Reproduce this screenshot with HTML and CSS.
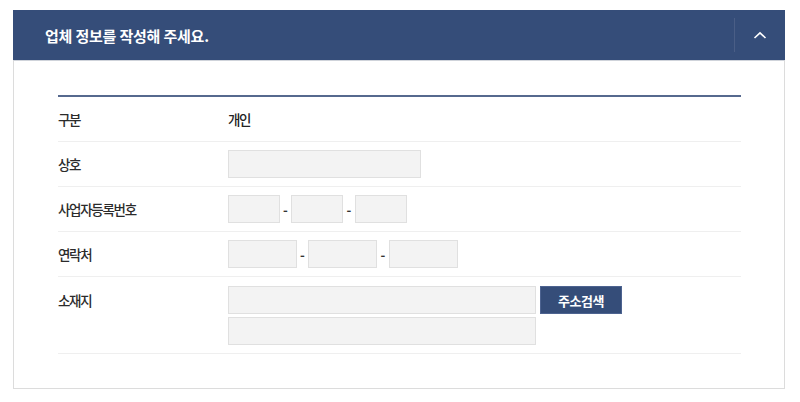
FILE: index.html
```html
<!DOCTYPE HTML>
<html>
<head>
	<title>업체 정보</title>
	<meta charset="utf-8" />
	<link rel="stylesheet" href="styles.css">
</head>
<body>
<div class="panel">
	<div class="panel-head">
		<h2>업체 정보를 작성해 주세요.</h2>
		<div class="toggle">
			<svg width="14" height="8" viewBox="0 0 14 8"><polyline points="1.5,7 7,1.8 12.5,7" fill="none" stroke="#fff" stroke-width="1.6" /></svg>
		</div>
	</div>
	<div class="panel-body">
		<div class="form">
			<div class="row">
				<div class="label">구분</div>
				<div class="value"><span class="text">개인</span></div>
			</div>
			<div class="row">
				<div class="label">상호</div>
				<div class="value"><input type="text" class="w193" /></div>
			</div>
			<div class="row">
				<div class="label">사업자등록번호</div>
				<div class="value">
					<input type="text" class="w52" /><span class="dash">-</span><input type="text" class="w52" /><span class="dash wide">-</span><input type="text" class="w52" />
				</div>
			</div>
			<div class="row">
				<div class="label">연락처</div>
				<div class="value">
					<input type="text" class="w69" /><span class="dash">-</span><input type="text" class="w69" /><span class="dash wide">-</span><input type="text" class="w69" />
				</div>
			</div>
			<div class="row last">
				<div class="label">소재지</div>
				<div class="value stack">
					<div class="line"><input type="text" class="w308" /><button class="btn">주소검색</button></div>
					<div class="line"><input type="text" class="w308" /></div>
				</div>
			</div>
		</div>
	</div>
</div>
</body>
</html>
```

FILE: styles.css
```css
body{
	font-family: "Noto Sans CJK KR", "Noto Sans", sans-serif;
	margin: 0px;
	padding: 10px 0 0 13px;
	background-color: #fff;
	color: #333;
}
.panel{
	width: 772px;
}
.panel-head{
	display: flex;
	align-items: center;
	height: 50px;
	background-color: #354d79;
}
.panel-head h2{
	flex: 1;
	margin: 0px;
	padding-left: 32px;
	font-size: 15px;
	font-weight: bold;
	color: #fff;
	letter-spacing: -0.2px;
}
.toggle{
	width: 50px;
	height: 34px;
	border-left: 1px solid #4a5e86;
	display: flex;
	align-items: center;
	justify-content: center;
}
.panel-body{
	border: 1px solid #dcdcdc;
	border-top: 1px solid #cfd3da;
	padding: 34px 43px 34px 44px;
}
.form{
	border-top: 2px solid #56698e;
}
.row{
	display: flex;
	align-items: flex-start;
	padding: 8px 0;
	border-bottom: 1px solid #efefef;
}
.row.last{
	padding: 9px 0 8px;
}
.label{
	width: 170px;
	line-height: 28px;
	font-size: 13.5px;
	font-weight: 500;
	letter-spacing: -1.3px;
	color: #2b2b2b;
}
.value{
	display: flex;
	align-items: center;
	font-size: 13px;
}
.text{
	line-height: 28px;
	font-size: 13.5px;
	font-weight: 500;
	letter-spacing: -1.3px;
	color: #222;
}
input[type="text"]{
	box-sizing: border-box;
	height: 28px;
	margin: 0px;
	padding: 0 6px;
	border: 1px solid #e0e0e0;
	background-color: #f3f3f3;
	outline: none;
}
.w193{ width: 193px; }
.w52{ width: 52px; }
.w69{ width: 69px; }
.w308{ width: 308px; }
.dash{
	width: 11px;
	text-align: center;
	font-weight: bold;
	color: #333;
}
.dash.wide{
	width: 12px;
}
.stack{
	flex-direction: column;
	align-items: flex-start;
	gap: 3px;
}
.line{
	display: flex;
}
.btn{
	box-sizing: border-box;
	height: 28px;
	width: 82px;
	margin-left: 4px;
	border: 1px solid #4d6390;
	background-color: #354d79;
	color: #fff;
	font-family: "Noto Sans CJK KR", sans-serif;
	font-size: 13px;
	font-weight: bold;
	letter-spacing: -0.5px;
	padding: 0;
}
```
